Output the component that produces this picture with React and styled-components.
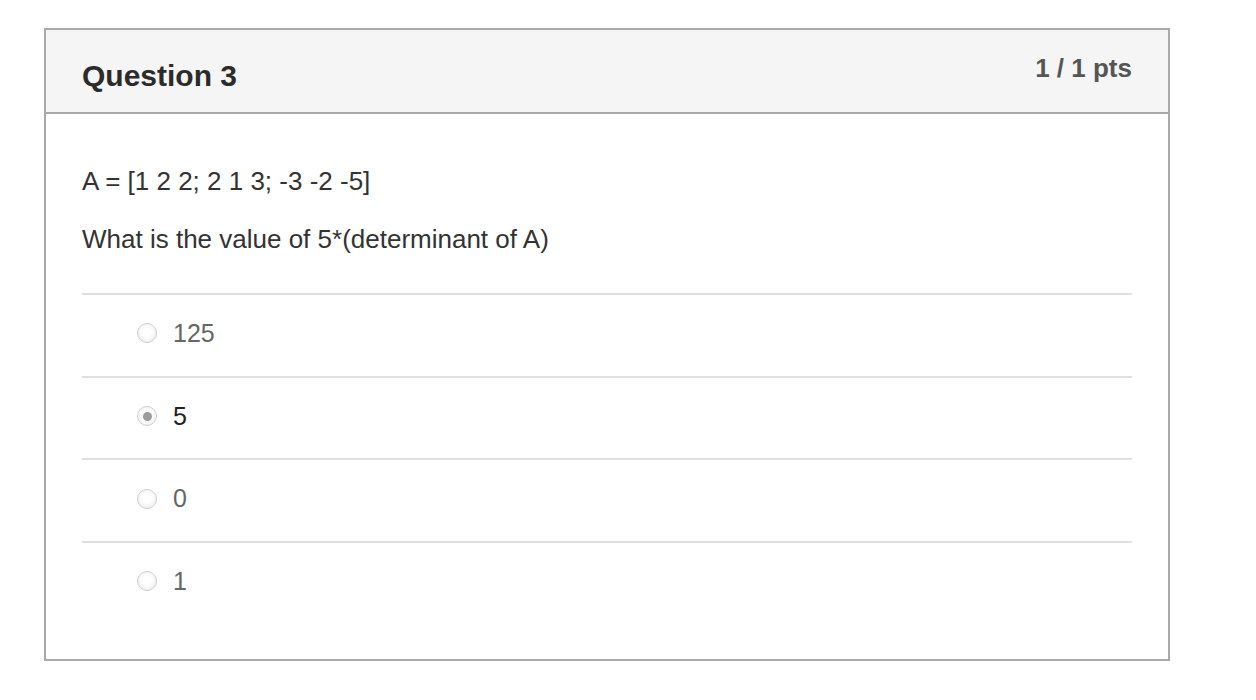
import styled, { createGlobalStyle } from 'styled-components';

const GlobalStyle = createGlobalStyle`
	html, body {
		margin: 0;
		padding: 0;
		background: #ffffff;
		font-family: 'Liberation Sans', Arial, Helvetica, sans-serif;
	}
`;

const Page = styled.div`
	padding: 28px 0 0 44px;
`;

const Card = styled.div`
	width: 1122px;
	border: 2px solid #a9a9a9;
	background: #ffffff;
`;

const Header = styled.div`
	display: flex;
	justify-content: space-between;
	align-items: flex-start;
	height: 82px;
	padding: 0 36px;
	background: #f5f5f5;
	border-bottom: 2px solid #a9a9a9;
`;

const QuestionName = styled.div`
	padding-top: 31px;
	font-size: 30px;
	line-height: 1;
	font-weight: bold;
	color: #2b2b2b;
`;

const Points = styled.div`
	padding-top: 25px;
	font-size: 26px;
	line-height: 1;
	font-weight: bold;
	color: #555555;
`;

const Body = styled.div`
	padding: 54px 36px 35px;
`;

const QuestionText = styled.p`
	margin: 0 0 ${props => props.$gap}px;
	font-size: 26px;
	line-height: 26px;
	color: #333333;
`;

const Answers = styled.div`
	display: flex;
	flex-direction: column;
`;

const AnswerRow = styled.label`
	display: flex;
	align-items: center;
	gap: 16px;
	height: 82.7px;
	padding: 0 0 4px 55px;
	box-sizing: border-box;
	border-top: 2px solid #e0e0e0;
`;

const Radio = styled.span`
	position: relative;
	width: 20px;
	height: 20px;
	box-sizing: border-box;
	border-radius: 50%;
	border: 1px solid #cfcfcf;
	background: radial-gradient(circle at 50% 45%, #ffffff 30%, #e9e9e9 100%);
	flex-shrink: 0;

	&::after {
		content: '';
		display: ${props => (props.$checked ? 'block' : 'none')};
		position: absolute;
		left: 50%;
		top: 50%;
		width: 9px;
		height: 9px;
		margin: -4.5px 0 0 -4.5px;
		border-radius: 50%;
		background: #9b9b9b;
	}
`;

const AnswerText = styled.span`
	font-size: 25px;
	line-height: 1;
	color: ${props => (props.$checked ? '#222222' : '#666666')};
`;

const answers = [
	{ text: '125', checked: false },
	{ text: '5', checked: true },
	{ text: '0', checked: false },
	{ text: '1', checked: false },
];

export default function App() {
	return (
		<>
			<GlobalStyle />
			<Page>
				<Card>
					<Header>
						<QuestionName>Question 3</QuestionName>
						<Points>1 / 1 pts</Points>
					</Header>
					<Body>
						<QuestionText $gap={32}>A = [1 2 2; 2 1 3; -3 -2 -5]</QuestionText>
						<QuestionText $gap={41}>What is the value of 5*(determinant of A)</QuestionText>
						<Answers>
							{answers.map(answer => (
								<AnswerRow key={answer.text}>
									<Radio $checked={answer.checked} />
									<AnswerText $checked={answer.checked}>{answer.text}</AnswerText>
								</AnswerRow>
							))}
						</Answers>
					</Body>
				</Card>
			</Page>
		</>
	);
}
